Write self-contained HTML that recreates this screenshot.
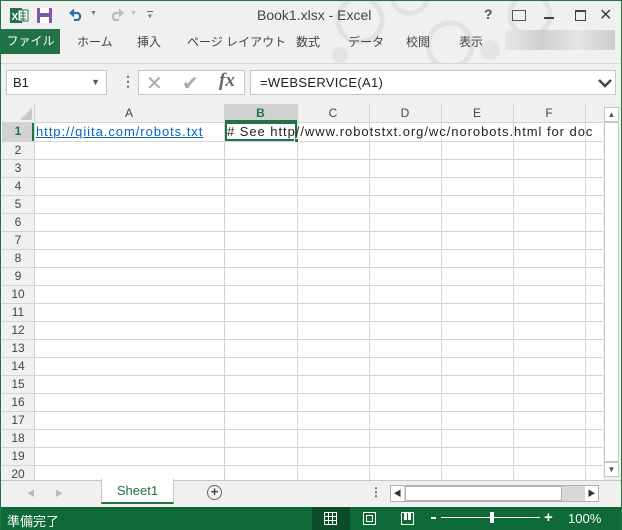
<!DOCTYPE html>
<html><head><meta charset="utf-8"><style>
*{margin:0;padding:0;box-sizing:border-box}
body{width:622px;height:530px;overflow:hidden;background:#f0f0f0;font-family:"Liberation Sans","Noto Sans CJK JP",sans-serif;position:relative}
.abs{position:absolute}
.tab{top:33px;font-size:12px;color:#444}
.grid{left:2px;top:104px;width:601px;height:376px;background:#fff;overflow:hidden}
.hl{position:absolute;left:0;width:601px;height:1px;background:#d4d4d4}
.vl{position:absolute;top:0;width:1px;height:376px;background:#d4d4d4}
.rn{position:absolute;left:0;width:32px;text-align:center;font-size:12px;color:#444}
.ch{position:absolute;top:0;height:18px;line-height:18px;text-align:center;font-size:12px;color:#444}
</style></head><body>
<div class="abs" style="left:0;top:0;width:622px;height:64px;background:#f0f0f0"></div>
<svg class="abs" style="left:320px;top:0" width="250" height="64">
<g fill="none" stroke="#e2e2e2" stroke-width="5"><circle cx="40" cy="20" r="22"/><circle cx="130" cy="45" r="22"/><circle cx="210" cy="15" r="20"/><circle cx="90" cy="-5" r="18"/></g>
<g fill="#e4e4e4"><circle cx="170" cy="50" r="10"/><circle cx="20" cy="55" r="8"/></g></svg>
<div class="abs" style="left:505px;top:30px;width:110px;height:20px;background:linear-gradient(90deg,#e8e8e8,#cfcfcf,#e4e4e4,#cccccc)"></div>
<div class="abs" style="left:0;top:0;width:622px;height:530px;border:1px solid #217346;border-bottom:none;pointer-events:none;z-index:5"></div>
<svg class="abs" style="left:10px;top:7px" width="20" height="17"><rect x="0" y="1" width="12" height="15" fill="#217346"/><rect x="8" y="3" width="10" height="11" fill="#fff" stroke="#217346"/><path d="M10 6H16M10 9H16M10 12H16M13 3V14" stroke="#217346" stroke-width="1"/><text x="1.5" y="13" font-size="10" font-weight="bold" fill="#fff" font-family="Liberation Sans">X</text></svg>
<div class="abs" style="left:37px;top:8px;width:15px;height:15px;background:#7e5aa6;border-radius:1px"><div style="position:absolute;left:3px;top:0;width:9px;height:5px;background:#fff"></div><div style="position:absolute;left:3px;top:9px;width:9px;height:6px;background:#fff"></div></div>
<svg class="abs" style="left:68px;top:7px" width="16" height="14"><path d="M4 6 H10 A4 4 0 0 1 10 13 H6" stroke="#2a6fb5" stroke-width="2.2" fill="none"/><path d="M1 6 L6 1.5 L6 10.5Z" fill="#2a6fb5"/></svg>
<div class="abs" style="left:90px;top:10px;font-size:7px;color:#777">▼</div>
<svg class="abs" style="left:109px;top:7px" width="16" height="14"><path d="M12 6 H6 A4 4 0 0 0 6 13 H10" stroke="#bbb" stroke-width="2.2" fill="none"/><path d="M15 6 L10 1.5 L10 10.5Z" fill="#bbb"/></svg>
<div class="abs" style="left:130px;top:10px;font-size:7px;color:#bbb">▼</div>
<div class="abs" style="left:147px;top:11px;width:6px;height:1px;background:#666"></div>
<div class="abs" style="left:147px;top:14px;font-size:6px;color:#666">▼</div>
<div class="abs" style="left:257px;top:7px;font-size:14px;color:#444">Book1.xlsx - Excel</div>
<div class="abs" style="left:484px;top:6px;font-size:14px;color:#555;font-weight:bold">?</div>
<div class="abs" style="left:512px;top:10px;width:14px;height:11px;border:1px solid #555"></div>
<div class="abs" style="left:544px;top:17px;width:10px;height:2px;background:#444"></div>
<div class="abs" style="left:575px;top:10px;width:11px;height:11px;border:1px solid #444;border-top-width:2px"></div>
<div class="abs" style="left:599px;top:5px;font-size:16px;color:#444">✕</div>
<div class="abs" style="left:1px;top:29px;width:59px;height:25px;background:#217346;color:#fff;font-size:12px;line-height:25px;text-align:center">ファイル</div>
<div class="abs tab" style="left:77px">ホーム</div>
<div class="abs tab" style="left:137px">挿入</div>
<div class="abs tab" style="left:187px">ページ レイアウト</div>
<div class="abs tab" style="left:296px">数式</div>
<div class="abs tab" style="left:348px">データ</div>
<div class="abs tab" style="left:406px">校閲</div>
<div class="abs tab" style="left:459px">表示</div>
<div class="abs" style="left:1px;top:63px;width:620px;height:1px;background:#d8d8d8"></div>
<div class="abs" style="left:6px;top:70px;width:101px;height:25px;background:#fff;border:1px solid #c6c6c6;font-size:13px;line-height:23px;padding-left:6px;color:#222">B1<span style="position:absolute;right:6px;top:0;font-size:9px;color:#555">▼</span></div>
<div class="abs" style="left:121px;top:73px;font-size:14px;color:#666;font-weight:bold">⋮</div>
<div class="abs" style="left:138px;top:70px;width:107px;height:25px;background:#fff;border:1px solid #c6c6c6"></div>
<div class="abs" style="left:146px;top:71px;font-size:20px;color:#aaa">✕</div>
<div class="abs" style="left:182px;top:71px;font-size:20px;color:#aaa">✔</div>
<div class="abs" style="left:219px;top:70px;font-size:19px;color:#666;font-family:'Liberation Serif',serif;font-style:italic;font-weight:bold">fx</div>
<div class="abs" style="left:250px;top:70px;width:366px;height:25px;background:#fff;border:1px solid #c6c6c6;font-size:13px;line-height:23px;padding-left:9px;color:#222;letter-spacing:0.3px">=WEBSERVICE(A1)</div>
<svg class="abs" style="left:598px;top:79px" width="14" height="9"><path d="M1 1 L7 7 L13 1" stroke="#444" stroke-width="2.5" fill="none"/></svg>
<div class="abs grid">
<div style="position:absolute;left:0;top:0;width:601px;height:18px;background:#f0f0f0"></div>
<div style="position:absolute;left:0;top:0;width:32px;height:376px;background:#f0f0f0"></div>
<div style="position:absolute;left:222px;top:0;width:73px;height:18px;background:#d2d2d2;border-bottom:2px solid #217346"></div>
<div style="position:absolute;left:0;top:18px;width:32px;height:19px;background:#d2d2d2;border-right:2px solid #217346"></div>
<svg style="position:absolute;left:18px;top:4px" width="12" height="12"><path d="M12 0 L12 12 L0 12Z" fill="#c8c8c8"/></svg>
<div class="ch" style="left:32px;width:190px">A</div>
<div class="ch" style="left:222px;width:73px;color:#217346;font-weight:bold">B</div>
<div class="ch" style="left:295px;width:72px">C</div>
<div class="ch" style="left:367px;width:72px">D</div>
<div class="ch" style="left:439px;width:72px">E</div>
<div class="ch" style="left:511px;width:72px">F</div>
<div id="lines"></div>
<div style="position:absolute;left:34px;top:20px;font-size:13px;color:#0563c1;text-decoration:underline;letter-spacing:0.95px;white-space:nowrap">http://qiita.com/robots.txt</div>
<div style="position:absolute;left:223px;top:18px;width:72px;height:19px;border:2px solid #217346"></div>
<div style="position:absolute;left:292px;top:34px;width:5px;height:5px;background:#217346;border:1px solid #fff"></div>
<div style="position:absolute;left:225px;top:20px;font-size:13px;color:#222;white-space:nowrap;width:372px;overflow:hidden;letter-spacing:0.95px">#&nbsp;See&nbsp;http//www.robotstxt.org/wc/norobots.html for doc</div>
</div>
<script>
var L=document.getElementById('lines'),h='';
var xs=[32,222,295,367,439,511,583];xs.forEach(function(x){h+='<div class="vl" style="left:'+x+'px"></div>'});
var y=18;h+='<div class="hl" style="top:18px"></div>';
for(var i=1;i<=20;i++){var rh=i==1?19:18;h+='<div class="rn" style="top:'+(y+2)+'px;'+(i==1?'color:#217346;font-weight:bold':'')+'">'+i+'</div>';y+=rh;h+='<div class="hl" style="top:'+y+'px"></div>'}
L.innerHTML=h;
</script>
<div class="abs" style="left:603px;top:104px;width:17px;height:376px;background:#f0f0f0"></div>
<div class="abs" style="left:604px;top:107px;width:15px;height:15px;background:#fff;border:1px solid #c6c6c6;font-size:8px;text-align:center;line-height:13px;color:#555">▲</div>
<div class="abs" style="left:604px;top:122px;width:15px;height:340px;background:#fff;border:1px solid #c6c6c6"></div>
<div class="abs" style="left:604px;top:462px;width:15px;height:15px;background:#fff;border:1px solid #c6c6c6;font-size:8px;text-align:center;line-height:13px;color:#555">▼</div>
<div class="abs" style="left:1px;top:480px;width:620px;height:27px;background:#f0f0f0;border-top:1px solid #c6c6c6"></div>
<div class="abs" style="left:27px;top:488px;font-size:8px;color:#bbb">◀</div>
<div class="abs" style="left:55px;top:488px;font-size:8px;color:#bbb">▶</div>
<div class="abs" style="left:101px;top:479px;width:73px;height:25px;background:#fff;border:1px solid #c6c6c6;border-top:none;border-bottom:2px solid #217346;color:#217346;font-size:13px;text-align:center;line-height:24px">Sheet1</div>
<div class="abs" style="left:207px;top:485px;width:15px;height:15px;border:1.5px solid #666;border-radius:50%;font-size:13px;line-height:12px;text-align:center;color:#444;font-weight:bold">+</div>
<div class="abs" style="left:370px;top:485px;font-size:12px;color:#666;font-weight:bold">⋮</div>
<div class="abs" style="left:390px;top:485px;width:209px;height:17px;background:#d8d8d8;border:1px solid #b0b0b0"></div>
<div class="abs" style="left:391px;top:486px;width:13px;height:15px;background:#fff;font-size:8px;line-height:15px;text-align:center;color:#333">◀</div>
<div class="abs" style="left:405px;top:486px;width:157px;height:15px;background:#fff;border:1px solid #b0b0b0"></div>
<div class="abs" style="left:585px;top:486px;width:13px;height:15px;background:#fff;font-size:8px;line-height:15px;text-align:center;color:#333">▶</div>
<div class="abs" style="left:0;top:507px;width:622px;height:23px;background:#0e6a37"></div>
<div class="abs" style="left:7px;top:511px;font-size:13px;color:#fff">準備完了</div>
<div class="abs" style="left:312px;top:507px;width:38px;height:23px;background:#0a4d28"></div>
<svg class="abs" style="left:323px;top:511px" width="16" height="15"><g stroke="#fff" fill="none" stroke-width="1"><rect x="1.5" y="1.5" width="12" height="12"/><path d="M5.5 1.5V13.5M9.5 1.5V13.5M1.5 5.5H13.5M1.5 9.5H13.5"/></g></svg>
<svg class="abs" style="left:362px;top:511px" width="16" height="15"><g stroke="#fff" fill="none"><rect x="1.5" y="1.5" width="12" height="12"/><rect x="4.5" y="4.5" width="6" height="6"/></g></svg>
<svg class="abs" style="left:400px;top:511px" width="16" height="15"><rect x="1.5" y="1.5" width="12" height="12" stroke="#fff" fill="none"/><rect x="4" y="1" width="3" height="8" fill="#fff"/><rect x="8" y="1" width="3" height="8" fill="#fff"/></svg>
<div class="abs" style="left:431px;top:517px;width:5px;height:2px;background:#fff"></div>
<div class="abs" style="left:441px;top:517px;width:99px;height:1px;background:#fff"></div>
<div class="abs" style="left:490px;top:512px;width:4px;height:11px;background:#fff"></div>
<div class="abs" style="left:544px;top:509px;font-size:15px;font-weight:bold;color:#fff">+</div>
<div class="abs" style="left:568px;top:511px;font-size:13px;color:#fff">100%</div>
</body></html>
